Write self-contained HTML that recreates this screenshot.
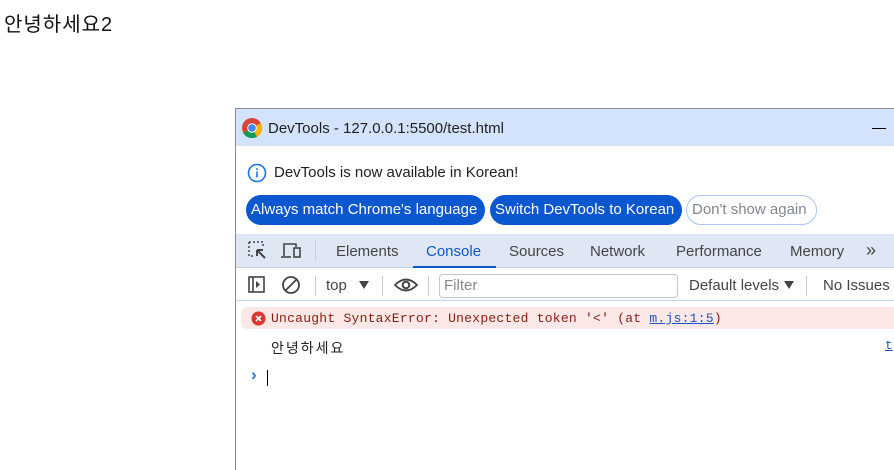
<!DOCTYPE html>
<html><head><meta charset="utf-8"><style>
*{margin:0;padding:0;box-sizing:border-box}
html,body{width:894px;height:470px;overflow:hidden}
body{background:#fff;font-family:"Liberation Sans","Noto Sans CJK KR",sans-serif;position:relative}
.abs{position:absolute;white-space:nowrap}
#win{position:absolute;left:235px;top:108px;width:659px;height:362px;border-left:1px solid #8a8a8a;border-top:1px solid #8a8a8a;background:#fff;overflow:hidden}
.t{font-size:15px;color:#1f1f1f}
</style></head><body>
<div class="abs" style="left:4px;top:8px;font-size:20px;letter-spacing:1px;color:#111">안녕하세요2</div>
<div id="win">
 <div class="abs" style="left:0;top:0;width:670px;height:37px;background:#d3e3fd"></div>
 <svg class="abs" style="left:5px;top:8px" width="22" height="22" viewBox="0 0 22 22"><circle cx="11" cy="11" r="10" fill="#db4437"/><path d="M11 11 L2.3 16 A10 10 0 0 0 16 19.7Z" fill="#0f9d58"/><path d="M11 11 L16 19.7 A10 10 0 0 0 19.7 6Z" fill="#f4b400"/><circle cx="11" cy="11" r="4.8" fill="#fff"/><circle cx="11" cy="11" r="3.8" fill="#4285f4"/></svg>
 <div class="abs t" style="left:32px;top:11px;font-size:15px">DevTools - 127.0.0.1:5500/test.html</div>
 <div class="abs" style="left:636px;top:19px;width:14px;height:1px;background:#000"></div>
 <svg class="abs" style="left:11px;top:54px" width="20" height="20"><circle cx="10" cy="10" r="8.5" fill="none" stroke="#1a73e8" stroke-width="1.6"/><rect x="9.2" y="8.5" width="1.6" height="6" fill="#1a73e8"/><rect x="9.2" y="5.2" width="1.6" height="1.8" fill="#1a73e8"/></svg>
 <div class="abs t" style="left:38px;top:55px">DevTools is now available in Korean!</div>
 <div class="abs" style="left:10px;top:86px;height:30px;width:239px;border-radius:15px;background:#0b57d0;color:#fff;font-size:15px;line-height:30px;padding-left:5px">Always match Chrome's language</div>
 <div class="abs" style="left:254px;top:86px;height:30px;width:192px;border-radius:15px;background:#0b57d0;color:#fff;font-size:15px;line-height:30px;padding-left:5px">Switch DevTools to Korean</div>
 <div class="abs" style="left:450px;top:86px;height:30px;width:131px;border-radius:15px;border:1px solid #a8c7fa;color:#80868b;font-size:15px;line-height:28px;padding-left:5px">Don't show again</div>
 <div class="abs" style="left:0;top:125px;width:670px;height:34px;background:#dfe7f5;border-bottom:1px solid #c4d4ee"></div>
 <svg class="abs" style="left:12px;top:132px" width="20" height="20"><path d="M1 1h14v5" fill="none" stroke="#444" stroke-width="1.5" stroke-dasharray="2 2"/><path d="M1 1v14h5" fill="none" stroke="#444" stroke-width="1.5" stroke-dasharray="2 2"/><path d="M9 9l8 8M9 9h6M9 9v6" stroke="#444" stroke-width="2" fill="none"/></svg>
 <svg class="abs" style="left:45px;top:132px" width="22" height="20"><path d="M3 15V3h12v3" fill="none" stroke="#444" stroke-width="1.6"/><path d="M0 16h10" stroke="#444" stroke-width="1.6"/><rect x="13" y="7" width="6" height="9" fill="none" stroke="#444" stroke-width="1.6"/></svg>
 <div class="abs" style="left:79px;top:131px;width:1px;height:22px;background:#c8d0dc"></div>
 <div class="abs t" style="left:100px;top:134px;color:#444">Elements</div>
 <div class="abs t" style="left:190px;top:134px;color:#0b57d0">Console</div>
 <div class="abs" style="left:177px;top:157px;width:83px;height:2px;background:#0b57d0"></div>
 <div class="abs t" style="left:273px;top:134px;color:#444">Sources</div>
 <div class="abs t" style="left:354px;top:134px;color:#444">Network</div>
 <div class="abs t" style="left:440px;top:134px;color:#444">Performance</div>
 <div class="abs t" style="left:554px;top:134px;color:#444">Memory</div>
 <div class="abs t" style="left:630px;top:131px;color:#444;font-size:18px">»</div>
 <div class="abs" style="left:0;top:191px;width:670px;height:1px;background:#c4d4ee"></div>
 <svg class="abs" style="left:12px;top:167px" width="18" height="18"><rect x="1" y="1" width="15" height="15" fill="none" stroke="#444" stroke-width="1.6"/><path d="M5 1v15" stroke="#444" stroke-width="1.6"/><path d="M8 5l4 3.5-4 3.5z" fill="#444"/></svg>
 <svg class="abs" style="left:45px;top:166px" width="20" height="20"><circle cx="10" cy="10" r="8" fill="none" stroke="#444" stroke-width="1.8"/><path d="M4.5 15.5l11-11" stroke="#444" stroke-width="1.8"/></svg>
 <div class="abs" style="left:79px;top:167px;width:1px;height:20px;background:#c8d0dc"></div>
 <div class="abs t" style="left:90px;top:168px;color:#444">top</div>
 <div class="abs" style="left:123px;top:172px;border-left:5px solid transparent;border-right:5px solid transparent;border-top:8px solid #444"></div>
 <div class="abs" style="left:146px;top:167px;width:1px;height:20px;background:#c8d0dc"></div>
 <svg class="abs" style="left:158px;top:168px" width="24" height="16"><path d="M1 8Q12 -3 23 8Q12 19 1 8z" fill="none" stroke="#444" stroke-width="1.8"/><circle cx="12" cy="8" r="3.3" fill="none" stroke="#444" stroke-width="2"/></svg>
 <div class="abs" style="left:192px;top:167px;width:1px;height:20px;background:#c8d0dc"></div>
 <div class="abs" style="left:203px;top:165px;width:239px;height:24px;border:1px solid #c5c5c5;border-radius:4px;color:#888;font-size:15px;line-height:22px;padding-left:4px">Filter</div>
 <div class="abs t" style="left:453px;top:168px;color:#444">Default levels</div>
 <div class="abs" style="left:548px;top:172px;border-left:5px solid transparent;border-right:5px solid transparent;border-top:8px solid #444"></div>
 <div class="abs" style="left:570px;top:167px;width:1px;height:20px;background:#c8d0dc"></div>
 <div class="abs t" style="left:587px;top:168px;color:#444">No Issues</div>
 <div class="abs" style="left:5px;top:198px;width:665px;height:22px;background:#fce8e6;border-radius:6px 0 0 6px"></div>
 <svg class="abs" style="left:15px;top:202px" width="15" height="15"><circle cx="7.5" cy="7.5" r="7" fill="#dc362e"/><path d="M5 5l5 5M10 5l-5 5" stroke="#fff" stroke-width="1.6"/></svg>
 <div class="abs" style="left:35px;top:202px;font-family:'Liberation Mono','Noto Sans CJK KR',monospace;font-size:13px;letter-spacing:0.25px;color:#8b1a10">Uncaught SyntaxError: Unexpected token '&lt;' (at <span style="color:#1a55c4;text-decoration:underline">m.js:1:5</span>)</div>
 <div class="abs" style="left:35px;top:229px;font-family:'Liberation Mono','Noto Sans CJK KR',monospace;font-size:14px;letter-spacing:2px;color:#1f1f1f">안녕하세요</div>
 <div class="abs" style="left:649px;top:229px;font-family:'Liberation Mono',monospace;font-size:13px;color:#1a55c4;text-decoration:underline">t</div>
 <div class="abs" style="left:15px;top:256px;color:#1a73e8;font-size:17px;font-weight:bold">›</div>
 <div class="abs" style="left:31px;top:261px;width:1px;height:16px;background:#000"></div>
</div>
</body></html>
